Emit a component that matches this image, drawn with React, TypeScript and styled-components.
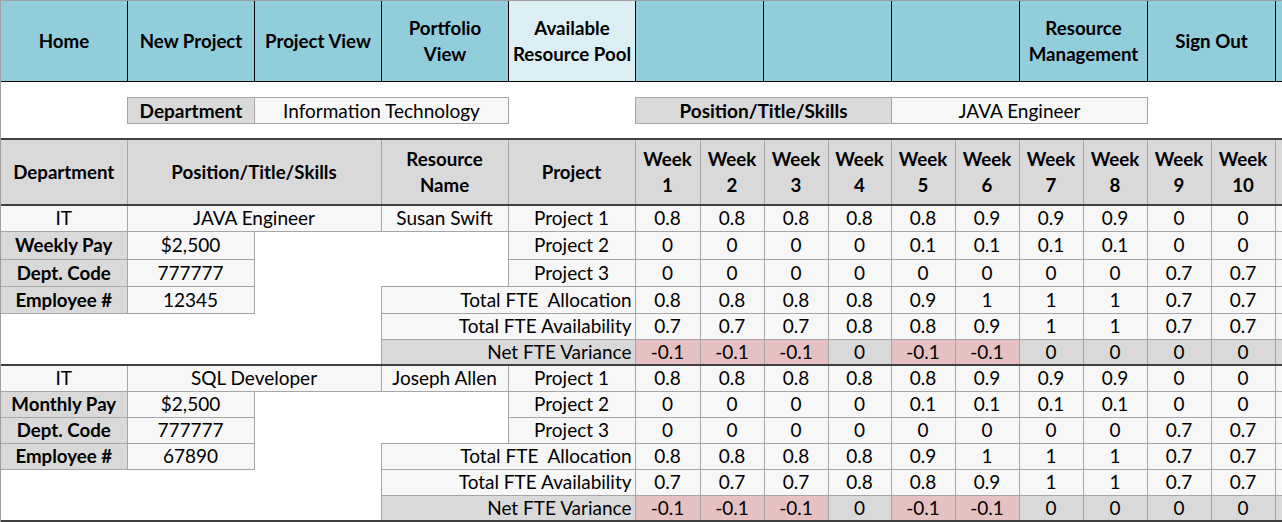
import React from 'react';
import styled, { createGlobalStyle, css } from 'styled-components';

const GlobalStyle = createGlobalStyle`
  html, body { margin: 0; padding: 0; background: #ffffff; }
  body { overflow: hidden; }
`;

const FONT = `Lato, "Open Sans", "Liberation Sans", sans-serif`;

const Page = styled.div`
  width: 1282px;
  height: 522px;
  overflow: hidden;
  box-sizing: border-box;
  border-top: 1px solid #9f9f9f;
  border-left: 1px solid #9f9f9f;
  font-family: ${FONT};
  font-size: 19px;
  color: #000;
  background: #fff;
`;

const Nav = styled.nav`
  display: grid;
  grid-template-columns: repeat(5, 127px) repeat(5, 128px) 1fr;
  height: 81px;
  box-sizing: border-box;
  border-bottom: 1px solid #000;
  background: #92cddc;
`;

const NavItem = styled.div<{ $active?: boolean; $filler?: boolean }>`
  display: flex;
  align-items: center;
  justify-content: center;
  text-align: center;
  box-sizing: border-box;
  border-right: ${(p) => (p.$filler ? 'none' : '1px solid #000')};
  background: ${(p) => (p.$active ? '#daeef3' : '#92cddc')};
  font-weight: 700;
  font-size: 18.7px;
  line-height: 26px;
  padding: 0 1px;
  white-space: nowrap;
`;

const FilterBar = styled.div`
  display: grid;
  grid-template-columns: 126px 128px 254px 126px 257px 256px 1fr;
  align-items: start;
  height: 56px;
  box-sizing: border-box;
  padding-top: 15px;
`;

const FilterLabel = styled.div`
  height: 27px;
  box-sizing: border-box;
  border: 1px solid #a6a6a6;
  background: #d9d9d9;
  font-weight: 700;
  display: flex;
  align-items: center;
  justify-content: center;
`;

const FilterValue = styled.div`
  height: 27px;
  box-sizing: border-box;
  border: 1px solid #a6a6a6;
  border-left: none;
  background: #f7f7f7;
  display: flex;
  align-items: center;
  justify-content: center;
`;

const Sheet = styled.table`
  border-collapse: collapse;
  table-layout: fixed;
  width: 1339px;
  font-family: ${FONT};
  font-size: 19px;
`;

type Tone = 'empty' | 'data' | 'label' | 'head' | 'neg' | 'grey';

const toneBg: Record<Tone, string> = {
  empty: '#ffffff',
  data: '#f7f7f7',
  label: '#d9d9d9',
  head: '#d9d9d9',
  neg: '#e6c1c1',
  grey: '#d9d9d9',
};

const Cell = styled.td<{ $tone?: Tone; $align?: 'left' | 'center' | 'right'; $bold?: boolean }>`
  padding: 0 3px;
  vertical-align: middle;
  white-space: nowrap;
  overflow: hidden;
  line-height: ${(p) => (p.$tone === 'head' ? '26px' : '20px')};
  text-align: ${(p) => p.$align || 'center'};
  font-weight: ${(p) => (p.$bold ? 700 : 400)};
  font-size: ${(p) => (p.$bold ? '18.7px' : '19px')};
  background: ${(p) => toneBg[p.$tone || 'data']};
  border: ${(p) => (p.$tone === 'empty' ? 'none' : '1px solid #a6a6a6')};
  &:first-child {
    border-left: none;
  }
`;

const Row = styled.tr<{ $h: number; $divider?: boolean; $header?: boolean }>`
  height: ${(p) => p.$h}px;
  ${(p) =>
    p.$header &&
    css`
      & > td {
        border-top: 2px solid #404040;
        border-bottom: 2px solid #404040;
      }
    `}
  ${(p) =>
    p.$divider &&
    css`
      & > td {
        border-bottom: 2px solid #404040;
      }
    `}
`;

const colWidths = [126, 127, 127, 127, 127, 65, 64, 64, 63, 64, 64, 64, 64, 64, 64, 65];

const navItems: { label: React.ReactNode; active?: boolean }[] = [
  { label: 'Home' },
  { label: 'New Project' },
  { label: 'Project View' },
  { label: <>Portfolio<br />View</> },
  { label: <>Available<br />Resource Pool</>, active: true },
  { label: '' },
  { label: '' },
  { label: '' },
  { label: <>Resource<br />Management</> },
  { label: 'Sign Out' },
];

type Resource = {
  dept: string;
  title: string;
  name: string;
  payLabel: string;
  pay: string;
  code: string;
  employee: string;
};

const projects = [
  ['0.8', '0.8', '0.8', '0.8', '0.8', '0.9', '0.9', '0.9', '0', '0'],
  ['0', '0', '0', '0', '0.1', '0.1', '0.1', '0.1', '0', '0'],
  ['0', '0', '0', '0', '0', '0', '0', '0', '0.7', '0.7'],
];
const allocation = ['0.8', '0.8', '0.8', '0.8', '0.9', '1', '1', '1', '0.7', '0.7'];
const availability = ['0.7', '0.7', '0.7', '0.8', '0.8', '0.9', '1', '1', '0.7', '0.7'];
const variance = ['-0.1', '-0.1', '-0.1', '0', '-0.1', '-0.1', '0', '0', '0', '0'];

const resources: Resource[] = [
  { dept: 'IT', title: 'JAVA Engineer', name: 'Susan Swift', payLabel: 'Weekly Pay', pay: '$2,500', code: '777777', employee: '12345' },
  { dept: 'IT', title: 'SQL Developer', name: 'Joseph Allen', payLabel: 'Monthly Pay', pay: '$2,500', code: '777777', employee: '67890' },
];

const WeekCells: React.FC<{ values: string[]; variance?: boolean }> = ({ values, variance: isVar }) => (
  <>
    {values.map((v, i) => (
      <Cell key={i} $tone={isVar ? (v.startsWith('-') ? 'neg' : 'grey') : 'data'}>
        {v}
      </Cell>
    ))}
    <Cell $tone={isVar ? 'grey' : 'data'} />
  </>
);

const ResourceBlock: React.FC<{ r: Resource; heights: number[] }> = ({ r, heights }) => (
  <>
    <Row $h={heights[0]}>
      <Cell>{r.dept}</Cell>
      <Cell colSpan={2}>{r.title}</Cell>
      <Cell>{r.name}</Cell>
      <Cell>Project 1</Cell>
      <WeekCells values={projects[0]} />
    </Row>
    <Row $h={heights[1]}>
      <Cell $tone="label" $bold>{r.payLabel}</Cell>
      <Cell>{r.pay}</Cell>
      <Cell $tone="empty" />
      <Cell $tone="empty" />
      <Cell>Project 2</Cell>
      <WeekCells values={projects[1]} />
    </Row>
    <Row $h={heights[2]}>
      <Cell $tone="label" $bold>Dept. Code</Cell>
      <Cell>{r.code}</Cell>
      <Cell $tone="empty" />
      <Cell $tone="empty" />
      <Cell>Project 3</Cell>
      <WeekCells values={projects[2]} />
    </Row>
    <Row $h={heights[3]}>
      <Cell $tone="label" $bold>Employee #</Cell>
      <Cell>{r.employee}</Cell>
      <Cell $tone="empty" />
      <Cell colSpan={2} $align="right">Total FTE{'\u00a0'} Allocation</Cell>
      <WeekCells values={allocation} />
    </Row>
    <Row $h={heights[4]}>
      <Cell $tone="empty" />
      <Cell $tone="empty" />
      <Cell $tone="empty" />
      <Cell colSpan={2} $align="right">Total FTE Availability</Cell>
      <WeekCells values={availability} />
    </Row>
    <Row $h={heights[5]} $divider>
      <Cell $tone="empty" />
      <Cell $tone="empty" />
      <Cell $tone="empty" />
      <Cell colSpan={2} $align="right" $tone="grey">Net FTE Variance</Cell>
      <WeekCells values={variance} variance />
    </Row>
  </>
);

export default function App() {
  return (
    <>
      <GlobalStyle />
      <Page>
        <Nav>
          {navItems.map((n, i) => (
            <NavItem key={i} $active={n.active}>
              <span>{n.label}</span>
            </NavItem>
          ))}
          <NavItem $filler />
        </Nav>
        <FilterBar>
          <div />
          <FilterLabel>Department</FilterLabel>
          <FilterValue>Information Technology</FilterValue>
          <div />
          <FilterLabel>Position/Title/Skills</FilterLabel>
          <FilterValue>JAVA Engineer</FilterValue>
        </FilterBar>
        <Sheet>
          <colgroup>
            {colWidths.map((w, i) => (
              <col key={i} style={{ width: w }} />
            ))}
          </colgroup>
          <tbody>
            <Row $h={66} $header>
              <Cell $tone="head" $bold>Department</Cell>
              <Cell $tone="head" $bold colSpan={2}>Position/Title/Skills</Cell>
              <Cell $tone="head" $bold>Resource<br />Name</Cell>
              <Cell $tone="head" $bold>Project</Cell>
              {Array.from({ length: 10 }, (_, i) => (
                <Cell key={i} $tone="head" $bold>
                  Week<br />{i + 1}
                </Cell>
              ))}
              <Cell $tone="head" $bold />
            </Row>
            <ResourceBlock r={resources[0]} heights={[26, 28, 27, 27, 26, 26]} />
            <ResourceBlock r={resources[1]} heights={[26, 26, 26, 26, 26, 26]} />
          </tbody>
        </Sheet>
      </Page>
    </>
  );
}
